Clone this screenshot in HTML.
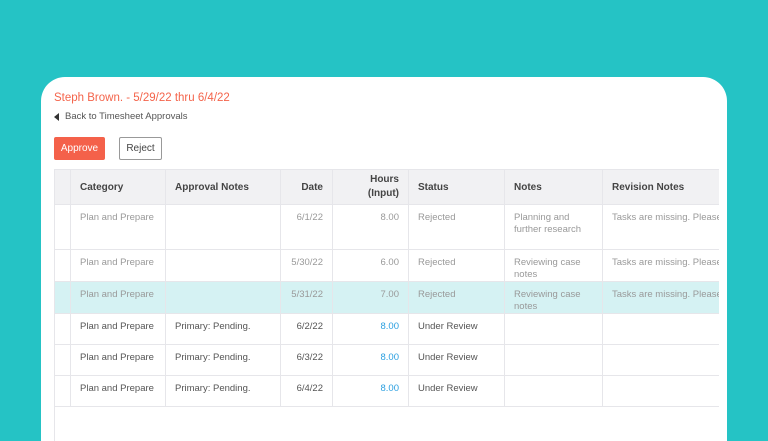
<!DOCTYPE html>
<html style="overflow:hidden;width:768px;height:441px"><head><style>
*{margin:0;padding:0;box-sizing:border-box}
body{width:768px;height:441px;background:#25c3c5;position:relative;overflow:hidden;font-family:"Liberation Sans",sans-serif}
.card{position:absolute;left:41px;top:77px;width:686px;height:364px;background:#fff;border-radius:24px 24px 0 0}
.t{position:absolute;white-space:nowrap}
.title{left:54px;top:92px;color:#f4644b;font-size:11.5px}
.back{left:65px;top:111px;color:#555;font-size:9.5px}
.tri{position:absolute;left:54px;top:113px;width:0;height:0;border-top:4px solid transparent;border-bottom:4px solid transparent;border-right:5px solid #333}
.btn{position:absolute;top:137px;height:23px;font-size:10px;line-height:21px;text-align:center;border-radius:2px}
.ap{left:54px;width:51px;background:#f4614a;color:#fff;border:1px solid #f4614a}
.rj{left:119px;width:43px;border:1px solid #999;color:#444}
.wrap{position:absolute;left:54px;top:169px;width:665px;height:238px;overflow:hidden}
table{border-collapse:collapse;table-layout:fixed;width:700px;font-size:9.5px}
td,th{border:1px solid #e6e6ea;padding:0 9px;vertical-align:top;overflow:hidden;white-space:nowrap}
th{background:#f1f1f3;color:#444;font-weight:bold;font-size:10px;height:35px;vertical-align:middle;text-align:left}
td{padding-top:7px;line-height:12px;color:#999}
.r{text-align:right}
.dk td{color:#555}
.hl td{background:#d5f2f3}
.b{color:#2a9fe0!important}
.wr{white-space:normal}
.lb{position:absolute;left:54px;top:406px;width:1px;height:40px;background:#e6e6ea}
</style></head><body>
<div class="card"></div>
<div class="t title">Steph Brown. - 5/29/22 thru 6/4/22</div>
<div class="tri"></div>
<div class="t back">Back to Timesheet Approvals</div>
<div class="btn ap">Approve</div>
<div class="btn rj">Reject</div>
<div class="wrap">
<table>
<colgroup><col style="width:16px"><col style="width:95px"><col style="width:115px"><col style="width:52px"><col style="width:76px"><col style="width:96px"><col style="width:98px"><col style="width:152px"></colgroup>
<tr><th></th><th>Category</th><th>Approval Notes</th><th class="r">Date</th><th class="r" style="line-height:14px">Hours<br>(Input)</th><th>Status</th><th>Notes</th><th>Revision Notes</th></tr>
<tr style="height:45px"><td></td><td>Plan and Prepare</td><td></td><td class="r">6/1/22</td><td class="r">8.00</td><td>Rejected</td><td class="wr">Planning and further research</td><td>Tasks are missing. Please revise</td></tr>
<tr style="height:32px"><td></td><td>Plan and Prepare</td><td></td><td class="r">5/30/22</td><td class="r">6.00</td><td>Rejected</td><td class="wr">Reviewing case notes</td><td>Tasks are missing. Please revise</td></tr>
<tr class="hl" style="height:32px"><td></td><td>Plan and Prepare</td><td></td><td class="r">5/31/22</td><td class="r">7.00</td><td>Rejected</td><td class="wr">Reviewing case notes</td><td>Tasks are missing. Please revise</td></tr>
<tr class="dk" style="height:31px"><td></td><td>Plan and Prepare</td><td>Primary: Pending.</td><td class="r">6/2/22</td><td class="r b">8.00</td><td>Under Review</td><td></td><td></td></tr>
<tr class="dk" style="height:31px"><td></td><td>Plan and Prepare</td><td>Primary: Pending.</td><td class="r">6/3/22</td><td class="r b">8.00</td><td>Under Review</td><td></td><td></td></tr>
<tr class="dk" style="height:31px"><td></td><td>Plan and Prepare</td><td>Primary: Pending.</td><td class="r">6/4/22</td><td class="r b">8.00</td><td>Under Review</td><td></td><td></td></tr>
</table>
</div>
<div class="lb"></div>
</body></html>
